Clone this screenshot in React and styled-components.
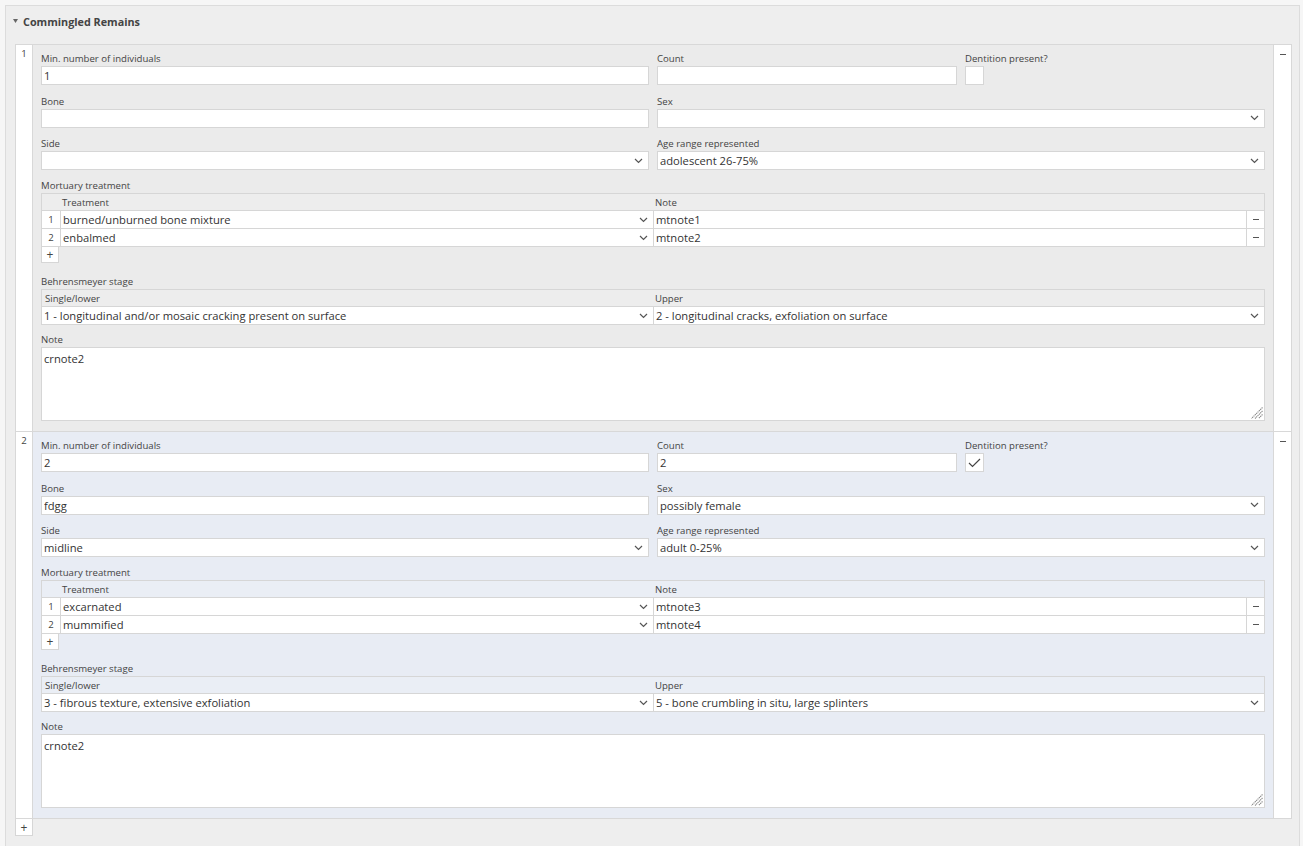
import React from "react";
import styled, { createGlobalStyle } from "styled-components";

const GlobalStyle = createGlobalStyle`
  * { box-sizing: border-box; }
  body {
    margin: 0;
    background: #f6f6f6;
    font-family: "Open Sans", "Liberation Sans", sans-serif;
    color: #333;
  }
`;

const Page = styled.div`
  padding: 5px 3px 0 5px;
  height: 846px;
  overflow: hidden;
`;

const Panel = styled.section`
  background: #eeeeee;
  border: 1px solid #dcdcdc;
  border-bottom: none;
  min-height: 841px;
`;

const PanelHeader = styled.div`
  display: flex;
  align-items: center;
  gap: 5px;
  height: 30px;
  padding-left: 7px;
  font-size: 10.8px;
  font-weight: 700;
  color: #444;
`;

const PanelBody = styled.div`
  padding: 8px 7px 8px 9px;
`;

const List = styled.div`
  border: 1px solid #d8d8d8;
  border-bottom: none;
`;

const Row = styled.div`
  display: grid;
  grid-template-columns: 17px 1fr 18px;
  border-bottom: 1px solid #d8d8d8;
`;

const IndexCell = styled.div`
  background: #fff;
  border-right: 1px solid #d8d8d8;
  text-align: center;
  font-size: 9.6px;
  line-height: 12px;
  padding-top: 3px;
  color: #444;
`;

const RemoveCell = styled.div`
  background: #fff;
  border-left: 1px solid #d8d8d8;
  display: flex;
  justify-content: center;
  padding-top: 9px;
`;

const Minus = styled.span`
  display: block;
  width: 6px;
  height: 1px;
  background: #555;
`;

const Content = styled.div`
  background: ${(p) => (p.$alt ? "#e8ecf4" : "#ebebeb")};
  padding: 7px 8px 10px;
  display: flex;
  flex-direction: column;
  gap: 8px;
`;

const Fields = styled.div`
  display: grid;
  grid-template-columns: repeat(4, 1fr);
  column-gap: 8px;
  row-gap: 9.5px;
`;

const Field = styled.div`
  grid-column: span ${(p) => p.$span || 1};
  display: flex;
  flex-direction: column;
  align-items: flex-start;
`;

const Label = styled.div`
  font-size: 9.6px;
  line-height: ${(p) => p.$h || 14}px;
  height: ${(p) => p.$h || 14}px;
  color: #444;
  white-space: nowrap;
`;

const Input = styled.input`
  width: 100%;
  height: 19px;
  border: 1px solid #d6d6d6;
  background: #fff;
  font-family: inherit;
  font-size: 11.2px;
  color: #333;
  padding: 0 2px;
  outline: none;
`;

const SelectBox = styled.div`
  width: 100%;
  height: ${(p) => (p.$bare ? "100%" : "19px")};
  border: ${(p) => (p.$bare ? "none" : "1px solid #d6d6d6")};
  background: #fff;
  display: flex;
  align-items: center;
  justify-content: space-between;
  font-size: 11.2px;
  color: #333;
  padding: 0 5px 0 2px;
  white-space: nowrap;
`;

const Check = styled.div`
  width: 19px;
  height: 19px;
  border: 1px solid #d6d6d6;
  background: #fff;
  display: flex;
  align-items: center;
  justify-content: center;
`;

const Table = styled.div`
  width: 100%;
  border: 1px solid #d6d6d6;
  display: grid;
  grid-template-columns: ${(p) => p.$cols};
`;

const HeadCell = styled.div`
  height: 16px;
  font-size: 9.6px;
  line-height: 14px;
  padding-top: 2px;
  color: #444;
  padding-left: ${(p) => p.$pad || 2}px;
  background: rgba(255, 255, 255, 0.12);
`;

const Cell = styled.div`
  height: 18px;
  border-top: 1px solid #d6d6d6;
  border-left: ${(p) => (p.$first ? "none" : "1px solid #d6d6d6")};
  background: #fff;
  font-size: 11.2px;
  color: #333;
  display: flex;
  align-items: center;
  justify-content: ${(p) => (p.$center ? "center" : "flex-start")};
  padding-left: ${(p) => (p.$flush || p.$center ? 0 : 2)}px;
`;

const NumCell = styled(Cell)`
  font-size: 9.6px;
  color: #444;
  justify-content: center;
  padding-left: 0;
`;

const AddButton = styled.div`
  width: ${(p) => p.$w}px;
  height: ${(p) => p.$h}px;
  margin-bottom: ${(p) => p.$mb || 0}px;
  background: #fff;
  border: 1px solid #d6d6d6;
  border-top: none;
  display: flex;
  align-items: center;
  justify-content: center;
  font-size: 12px;
  color: #444;
`;

const NoteWrap = styled.div`
  position: relative;
`;

const TextArea = styled.textarea`
  width: 100%;
  height: 74px;
  border: 1px solid #d6d6d6;
  background: #fff;
  font-family: inherit;
  font-size: 11.2px;
  color: #333;
  padding: 3px 2px;
  resize: none;
  outline: none;
  display: block;
`;

const Grip = styled.svg`
  position: absolute;
  right: 2px;
  bottom: 2px;
  pointer-events: none;
`;

const Section = styled.div`
  display: flex;
  flex-direction: column;
`;

const Chevron = () => (
  <svg width="9" height="6" viewBox="0 0 9 6">
    <polyline points="1,1 4.5,4.5 8,1" fill="none" stroke="#555" strokeWidth="1.2" />
  </svg>
);

const Select = ({ value, bare }) => (
  <SelectBox $bare={bare}>
    <span>{value}</span>
    <Chevron />
  </SelectBox>
);

const rows = [
  {
    min: "1",
    count: "",
    dent: false,
    bone: "",
    sex: "",
    side: "",
    age: "adolescent 26-75%",
    mt: [
      ["burned/unburned bone mixture", "mtnote1"],
      ["enbalmed", "mtnote2"],
    ],
    lower: "1 - longitudinal and/or mosaic cracking present on surface",
    upper: "2 - longitudinal cracks, exfoliation on surface",
    note: "crnote2",
  },
  {
    min: "2",
    count: "2",
    dent: true,
    bone: "fdgg",
    sex: "possibly female",
    side: "midline",
    age: "adult 0-25%",
    mt: [
      ["excarnated", "mtnote3"],
      ["mummified", "mtnote4"],
    ],
    lower: "3 - fibrous texture, extensive exfoliation",
    upper: "5 - bone crumbling in situ, large splinters",
    note: "crnote2",
  },
];

const RemainsRow = ({ row, index }) => (
  <Row>
    <IndexCell>{index + 1}</IndexCell>
    <Content $alt={index % 2 === 1}>
      <Fields>
        <Field $span={2}>
          <Label>Min. number of individuals</Label>
          <Input defaultValue={row.min} />
        </Field>
        <Field>
          <Label>Count</Label>
          <Input defaultValue={row.count} />
        </Field>
        <Field>
          <Label>Dentition present?</Label>
          <Check>
            {row.dent && (
              <svg width="13" height="10" viewBox="0 0 13 10">
                <polyline points="1,5 4.5,8.5 12,1" fill="none" stroke="#444" strokeWidth="1.2" />
              </svg>
            )}
          </Check>
        </Field>
        <Field $span={2}>
          <Label>Bone</Label>
          <Input defaultValue={row.bone} />
        </Field>
        <Field $span={2}>
          <Label>Sex</Label>
          <Select value={row.sex} />
        </Field>
        <Field $span={2}>
          <Label>Side</Label>
          <Select value={row.side} />
        </Field>
        <Field $span={2}>
          <Label>Age range represented</Label>
          <Select value={row.age} />
        </Field>
      </Fields>

      <Section>
        <Label $h={15}>Mortuary treatment</Label>
        <Table $cols="18px 1fr 1fr 18px">
          <HeadCell />
          <HeadCell>Treatment</HeadCell>
          <HeadCell>Note</HeadCell>
          <HeadCell />
          {row.mt.map(([treat, note], i) => (
            <React.Fragment key={i}>
              <NumCell $first>{i + 1}</NumCell>
              <Cell $flush>
                <Select value={treat} bare />
              </Cell>
              <Cell>{note}</Cell>
              <Cell $center>
                <Minus />
              </Cell>
            </React.Fragment>
          ))}
        </Table>
        <AddButton $w={18} $h={16} $mb={3}>+</AddButton>
      </Section>

      <Section>
        <Label $h={15}>Behrensmeyer stage</Label>
        <Table $cols="1fr 1fr">
          <HeadCell $pad={3}>Single/lower</HeadCell>
          <HeadCell>Upper</HeadCell>
          <Cell $first $flush>
            <Select value={row.lower} bare />
          </Cell>
          <Cell $flush>
            <Select value={row.upper} bare />
          </Cell>
        </Table>
      </Section>

      <Section>
        <Label>Note</Label>
        <NoteWrap>
          <TextArea defaultValue={row.note} />
          <Grip width="12" height="12" viewBox="0 0 12 12">
            <g stroke="#888" strokeWidth="1.1" strokeDasharray="1.3 0.6">
              <line x1="11.5" y1="0.5" x2="0.5" y2="11.5" />
              <line x1="11.5" y1="4" x2="4" y2="11.5" />
              <line x1="11.5" y1="7.5" x2="7.5" y2="11.5" />
            </g>
          </Grip>
        </NoteWrap>
      </Section>
    </Content>
    <RemoveCell>
      <Minus />
    </RemoveCell>
  </Row>
);

export default function App() {
  return (
    <Page>
      <GlobalStyle />
      <Panel>
        <PanelHeader>
          <svg width="5" height="4" viewBox="0 0 5 4">
            <polygon points="0,0 5,0 2.5,4" fill="#666" />
          </svg>
          Commingled Remains
        </PanelHeader>
        <PanelBody>
          <List>
            {rows.map((row, i) => (
              <RemainsRow key={i} row={row} index={i} />
            ))}
          </List>
          <AddButton $w={18} $h={17}>+</AddButton>
        </PanelBody>
      </Panel>
    </Page>
  );
}
